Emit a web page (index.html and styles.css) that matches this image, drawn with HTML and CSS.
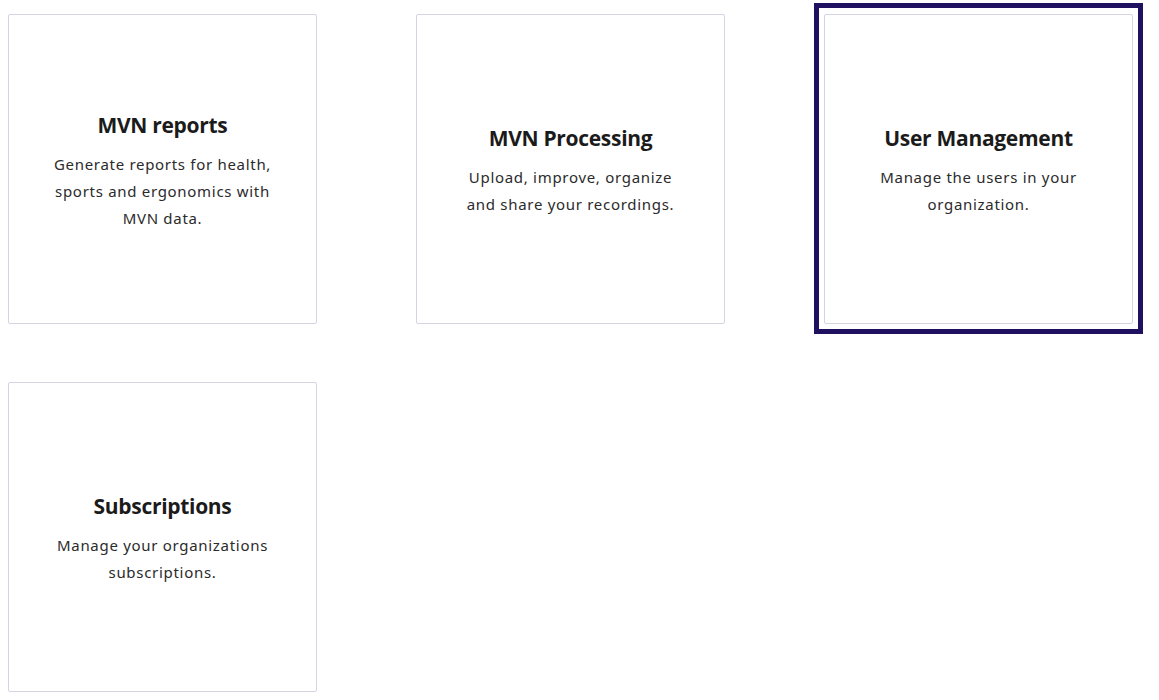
FILE: index.html
```html
<!DOCTYPE html>
<html lang="en">
<head>
<meta charset="utf-8">
<title>Apps</title>
<link rel="stylesheet" href="styles.css">
</head>
<body>
<main class="tiles">
  <a class="tile" href="#">
    <h2 class="tile-title">MVN reports</h2>
    <p class="tile-text">Generate reports for health, sports and ergonomics with MVN data.</p>
  </a>
  <a class="tile" href="#">
    <h2 class="tile-title">MVN Processing</h2>
    <p class="tile-text">Upload, improve, organize and share your recordings.</p>
  </a>
  <a class="tile tile-focused" href="#">
    <h2 class="tile-title">User Management</h2>
    <p class="tile-text">Manage the users in your organization.</p>
  </a>
  <a class="tile" href="#">
    <h2 class="tile-title">Subscriptions</h2>
    <p class="tile-text">Manage your organizations subscriptions.</p>
  </a>
</main>
</body>
</html>
```
FILE: styles.css
```css
html, body {
  margin: 0;
  padding: 0;
  background: #ffffff;
}

body {
  padding: 14px 8px 8px 8px;
  font-family: "Open Sans", "Liberation Sans", sans-serif;
}

.tiles {
  display: grid;
  grid-template-columns: repeat(3, 309px);
  grid-auto-rows: 310px;
  column-gap: 99px;
  row-gap: 58px;
}

.tile {
  position: relative;
  box-sizing: border-box;
  display: flex;
  flex-direction: column;
  align-items: center;
  justify-content: center;
  padding: 3px 40px 0 40px;
  border: 1px solid #d6d3e3;
  border-radius: 2px;
  text-decoration: none;
  text-align: center;
  color: #222;
}

.tile-focused::before {
  content: "";
  position: absolute;
  top: -12px;
  left: -11px;
  right: -11px;
  bottom: -11px;
  border: 5px solid #1f1160;
  pointer-events: none;
}

.tile-title {
  margin: 0 0 11px 0;
  font-family: "Open Sans", sans-serif;
  font-weight: 700;
  font-size: 21px;
  line-height: 30px;
  letter-spacing: -0.3px;
  color: #1b1b1b;
}

.tile-text {
  margin: 0;
  font-family: "Noto Sans", "Open Sans", sans-serif;
  font-size: 15px;
  line-height: 27px;
  letter-spacing: 0.7px;
  color: #2b2b2b;
}
```
